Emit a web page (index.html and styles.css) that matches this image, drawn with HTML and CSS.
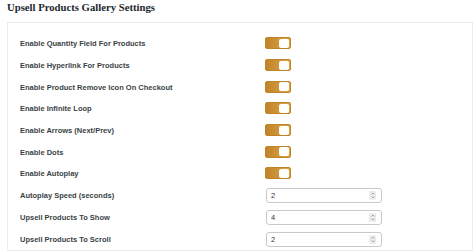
FILE: index.html
```html
<!DOCTYPE html>
<html lang="en">
<head>
  <meta charset="UTF-8" />
  <meta name="viewport" content="width=device-width, initial-scale=1.0"/>
  <title>Upsell Products Gallery Settings</title>
  <link rel="stylesheet" href="styles.css">
</head>
<body>

  <h2 class="title">Upsell Products Gallery Settings</h2>

  <div class="card">
    <div class="row">
      <label class="label">Enable Quantity Field For Products</label>
      <span class="toggle on"><span class="knob"></span></span>
    </div>
    <div class="row">
      <label class="label">Enable Hyperlink For Products</label>
      <span class="toggle on"><span class="knob"></span></span>
    </div>
    <div class="row">
      <label class="label">Enable Product Remove Icon On Checkout</label>
      <span class="toggle on"><span class="knob"></span></span>
    </div>
    <div class="row">
      <label class="label">Enable Infinite Loop</label>
      <span class="toggle on"><span class="knob"></span></span>
    </div>
    <div class="row">
      <label class="label">Enable Arrows (Next/Prev)</label>
      <span class="toggle on"><span class="knob"></span></span>
    </div>
    <div class="row">
      <label class="label">Enable Dots</label>
      <span class="toggle on"><span class="knob"></span></span>
    </div>
    <div class="row">
      <label class="label">Enable Autoplay</label>
      <span class="toggle on"><span class="knob"></span></span>
    </div>
    <div class="row">
      <label class="label">Autoplay Speed (seconds)</label>
      <div class="num-field">
        <input type="text" value="2">
        <span class="spin">
          <svg width="4" height="7" viewBox="0 0 4 7"><path d="M0.5 2.5 L2 1 L3.5 2.5 M0.5 4.5 L2 6 L3.5 4.5" fill="none" stroke="#8a8a8a" stroke-width="0.7"/></svg>
        </span>
      </div>
    </div>
    <div class="row">
      <label class="label">Upsell Products To Show</label>
      <div class="num-field">
        <input type="text" value="4">
        <span class="spin">
          <svg width="4" height="7" viewBox="0 0 4 7"><path d="M0.5 2.5 L2 1 L3.5 2.5 M0.5 4.5 L2 6 L3.5 4.5" fill="none" stroke="#8a8a8a" stroke-width="0.7"/></svg>
        </span>
      </div>
    </div>
    <div class="row">
      <label class="label">Upsell Products To Scroll</label>
      <div class="num-field">
        <input type="text" value="2">
        <span class="spin">
          <svg width="4" height="7" viewBox="0 0 4 7"><path d="M0.5 2.5 L2 1 L3.5 2.5 M0.5 4.5 L2 6 L3.5 4.5" fill="none" stroke="#8a8a8a" stroke-width="0.7"/></svg>
        </span>
      </div>
    </div>
  </div>

</body>
</html>
```

FILE: styles.css
```css
* { box-sizing: border-box; }
body {
  margin: 0;
  padding: 0;
  background: #fff;
  font-family: 'Liberation Sans', Arial, sans-serif;
  color: #32373c;
}
.title {
  margin: 0 0 8px 7px;
  font-family: 'Liberation Serif', 'Times New Roman', serif;
  font-size: 10.7px;
  line-height: 14px;
  font-weight: bold;
  color: #23282d;
}
.card {
  margin-left: 7px;
  width: 466px;
  height: 229px;
  padding: 10px 0 0 12px;
  border: 1px solid #ececec;
  background: #fff;
}
.row {
  display: flex;
  align-items: center;
  height: 21.7px;
}
.label {
  width: 245px;
  font-size: 7.5px;
  font-weight: bold;
  color: #3a3f44;
}
.toggle {
  display: flex;
  justify-content: flex-end;
  align-items: center;
  width: 26px;
  height: 12px;
  margin-top: -1px;
  padding: 1px;
  border-radius: 2px;
  border: 1px solid #c08428;
  background: linear-gradient(to right, #c1842a, #dba546);
}
.knob {
  width: 10px;
  height: 9px;
  border-radius: 2px;
  background: #fff;
}
.num-field {
  display: flex;
  align-items: center;
  width: 116px;
  height: 15px;
  margin-left: 1px;
  padding: 0 5px 0 4px;
  border: 1px solid #c9c9c9;
  border-radius: 3px;
  background: #fff;
}
.num-field input {
  flex: 1;
  width: 0;
  border: none;
  outline: none;
  padding: 0;
  font-family: 'Liberation Sans', Arial, sans-serif;
  font-size: 7.5px;
  color: #333;
  background: transparent;
}
.spin {
  display: flex;
  align-items: center;
  justify-content: center;
  width: 7px;
  height: 9px;
  background: #ececec;
  border-radius: 1px;
}
```
